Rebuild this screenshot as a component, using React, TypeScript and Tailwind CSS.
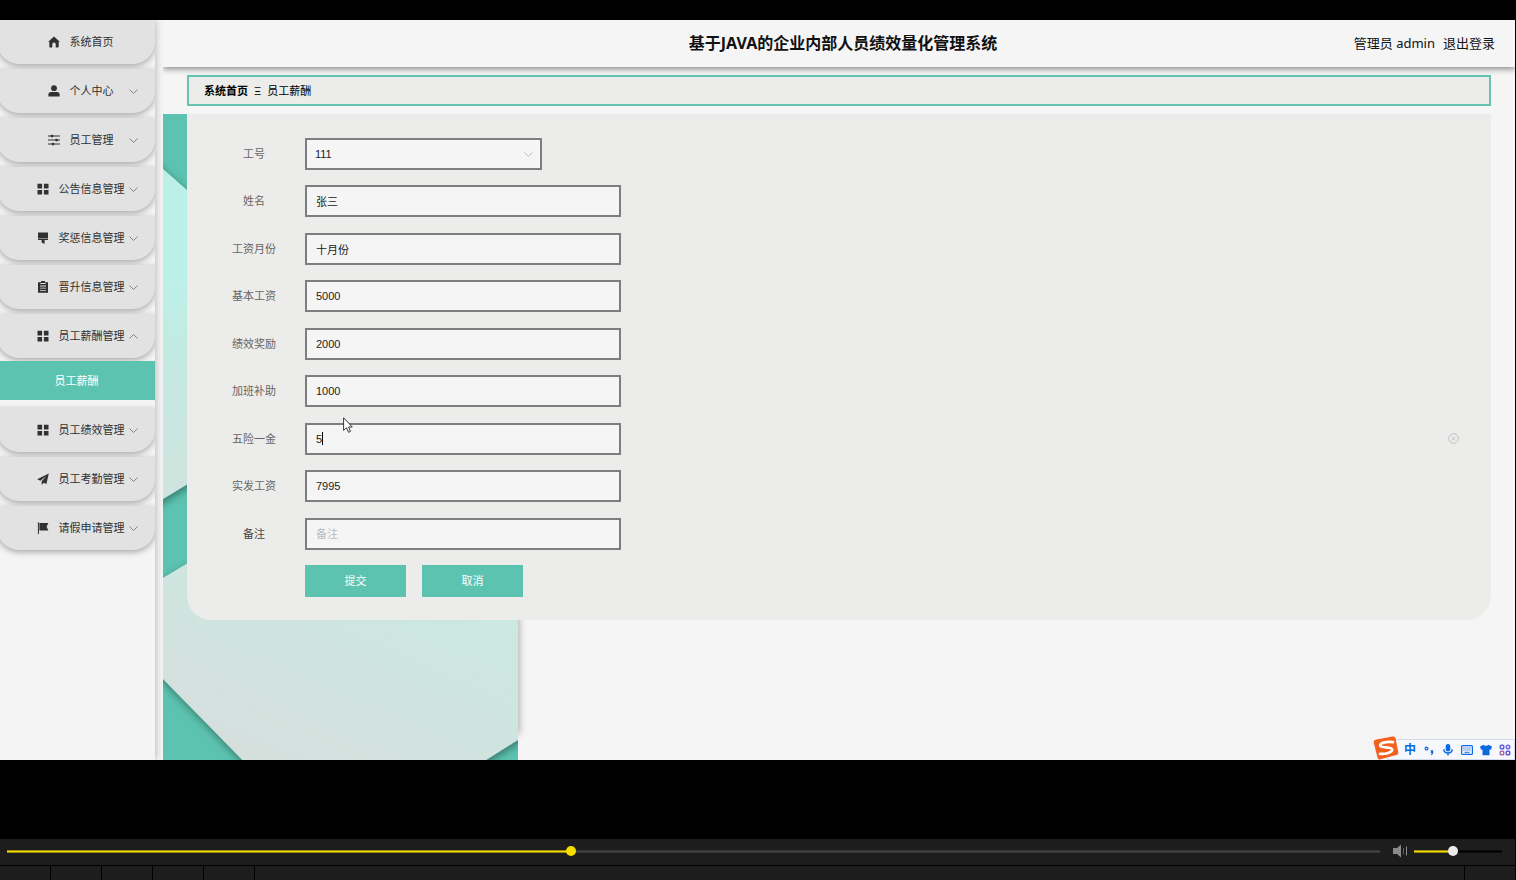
import type { ReactNode } from 'react'

const icons: Record<string, ReactNode> = {
  home: <path d="M6 .4.2 5.7h1.1v5.1c0 .4.3.7.7.7h2.3V8.2a1.7 1.7 0 0 1 3.4 0v3.3H10c.4 0 .7-.3.7-.7V5.7h1.1z" />,
  user: (
    <>
      <circle cx="6" cy="3.2" r="2.9" />
      <path d="M.4 11.6V9.4C.4 7.8 1.6 7 3 7h6c1.4 0 2.6.8 2.6 2.4v2.2z" />
    </>
  ),
  operation: (
    <>
      <path d="M0 1.6h12v1H0zM0 5.6h12v1H0zM0 9.6h12v1H0z" />
      <circle cx="4" cy="2.1" r="1.4" />
      <circle cx="8.5" cy="6.1" r="1.4" />
      <circle cx="5" cy="10.1" r="1.4" />
    </>
  ),
  grid: <path d="M.5.8h4.6v4.6H.5zM6.9.8h4.6v4.6H6.9zM.5 7h4.6v4.6H.5zM6.9 7h4.6v4.6H6.9z" />,
  brush: <path d="M1 .5h10v5.6H1zM1 6.6h10V8H7.6v4L4.6 10.4V8H1z" />,
  clipboard: (
    <path
      fillRule="evenodd"
      d="M4 0h4v1.3h3v10.4H1V1.3h3zM3.4 2v1h5.2V2zM3 4.6v.8h6v-.8zM3 6.8v.8h6v-.8zM3 9v.8h6V9z"
    />
  ),
  plane: <path d="M11.8.4.2 6.2l3.2 1.5L9.5 3 4.7 8.3V12l2.1-2.3 2.6 1.2z" />,
  flag: <path d="M.9.3h1v11.6h-1zM2.4.9h9L9.6 4.7l1.8 3.8h-9z" />,
}

const menu = [
  { label: '系统首页', icon: 'home' },
  { label: '个人中心', icon: 'user', arrow: true },
  { label: '员工管理', icon: 'operation', arrow: true },
  { label: '公告信息管理', icon: 'grid', arrow: true },
  { label: '奖惩信息管理', icon: 'brush', arrow: true },
  { label: '晋升信息管理', icon: 'clipboard', arrow: true },
  { label: '员工薪酬管理', icon: 'grid', arrow: true, children: ['员工薪酬'] },
  { label: '员工绩效管理', icon: 'grid', arrow: true },
  { label: '员工考勤管理', icon: 'plane', arrow: true },
  { label: '请假申请管理', icon: 'flag', arrow: true },
]

const fields = [
  { id: 'name', label: '姓名', value: '张三' },
  { id: 'month', label: '工资月份', value: '十月份' },
  { id: 'base', label: '基本工资', value: '5000' },
  { id: 'bonus', label: '绩效奖励', value: '2000' },
  { id: 'overtime', label: '加班补助', value: '1000' },
  { id: 'insurance', label: '五险一金', value: '5', editing: true },
  { id: 'actual', label: '实发工资', value: '7995' },
  { id: 'remark', label: '备注', value: '', dark: true },
]

function Chevron({ up, className }: { up?: boolean; className: string }) {
  return (
    <svg viewBox="0 0 9 9" className={className} fill="none" stroke="currentColor" strokeWidth="0.9">
      <path d={up ? 'M.5 6.5 4.5 2.5l4 4' : 'M.5 2.5l4 4 4-4'} />
    </svg>
  )
}

function Sidebar() {
  return (
    <nav className="w-[155px] shrink-0 overflow-hidden bg-[#f4f4f4] shadow-[0_0_8px_rgba(0,0,0,0.3)]">
      <ul className="flex flex-col gap-[5px]">
        {menu.map(item => (
          <li key={item.label}>
            <button className="-ml-[3px] flex h-11 w-[158px] items-center rounded-b-[22px] bg-[#e2e2e2] pl-[35px] pr-[17px] text-[#303133] shadow-[0_2px_6px_rgba(0,0,0,0.32)]">
              <span className="flex flex-1 items-center justify-center gap-2.5 whitespace-nowrap">
                <svg viewBox="0 0 12 12" className="h-3 w-3 shrink-0" fill="currentColor">{icons[item.icon]}</svg>
                {item.label}
              </span>
              {item.arrow ? <Chevron up={!!item.children} className="h-[9px] w-[9px] text-[#77797c]" /> : <span className="w-[9px]" />}
            </button>
            {item.children?.map(c => (
              <a key={c} href="#" className="relative mb-[3px] mt-[3px] flex h-[39px] items-center justify-center bg-[#5cc3b0] pr-0.5 text-white">
                {c}
              </a>
            ))}
          </li>
        ))}
      </ul>
    </nav>
  )
}

function Backdrop() {
  return (
    <svg viewBox="0 0 375 646" className="absolute left-0 top-0 h-[646px] w-[375px]">
      <defs>
        <linearGradient id="upper" x1="0" y1="0" x2="0" y2="1">
          <stop offset="0.35" stopColor="#bcf0e7" />
          <stop offset="0.6" stopColor="#c4e9e1" />
          <stop offset="1" stopColor="#d2e2de" />
        </linearGradient>
        <linearGradient id="lower" gradientUnits="userSpaceOnUse" x1="90" y1="660" x2="190" y2="440">
          <stop offset="0" stopColor="#d6dfdd" />
          <stop offset="1" stopColor="#cbe8e1" />
        </linearGradient>
        <filter id="soft" x="-20%" y="-20%" width="140%" height="140%">
          <feDropShadow dx="1" dy="3" stdDeviation="4" floodColor="#000" floodOpacity="0.4" />
        </filter>
        <filter id="edge" x="-10%" y="-10%" width="120%" height="120%">
          <feDropShadow dx="2" dy="0" stdDeviation="3" floodColor="#000" floodOpacity="0.25" />
        </filter>
        <clipPath id="sheet">
          <path d="M0 0h355v646H0z" />
        </clipPath>
      </defs>
      <path d="M0 0h355v620H0z" fill="#f5f5f5" filter="url(#edge)" />
      <g clipPath="url(#sheet)">
        <path d="M0 0h355v646H0z" fill="#5cc3b0" />
        <path d="M-20 36 0 55l200 176v32L0 385l-20 12z" fill="url(#upper)" filter="url(#soft)" />
        <path d="M-20 476 0 464 380 235v375L323 646l-40 26H105L0 565l-20-20z" fill="url(#lower)" filter="url(#soft)" />
      </g>
    </svg>
  )
}

function PayForm() {
  const box = 'h-8 border-2 border-[#7c7e80] bg-[#f5f5f5] text-[#222] outline-none rounded-none'
  return (
    <form className="relative mx-6 rounded-b-3xl bg-[#ececea] pb-[23px] pl-4 pr-8 pt-6">
      <div className="flex min-h-[459px] flex-col justify-between">
        <div className="flex items-center">
          <label htmlFor="no" className="w-[102px] text-center text-[#666]">工号</label>
          <div className="relative">
            <select id="no" className={`${box} w-[237px] appearance-none pl-2`}>
              <option>111</option>
            </select>
            <Chevron className="pointer-events-none absolute right-[9px] top-3 h-[9px] w-[9px] text-[#b4b6ba]" />
          </div>
        </div>
        {fields.map(f => (
          <div key={f.id} className="flex items-center">
            <label htmlFor={f.id} className={`w-[102px] text-center ${f.dark ? 'text-[#444]' : 'text-[#666]'}`}>{f.label}</label>
            <div className="relative">
              <input
                id={f.id}
                defaultValue={f.value}
                placeholder={f.label}
                className={`${box} block w-[316px] px-[9px] placeholder:text-[#b9bbc0]`}
              />
              {f.editing && (
                <>
                  <span className="absolute left-[17px] top-[9px] h-[13px] w-px bg-black" />
                  <svg viewBox="0 0 11 17" className="absolute -top-1.5 left-[38px] h-[17px] w-[11px]" fill="#fff" stroke="#222" strokeWidth="0.9">
                    <path d="M.6.8v12.6l2.9-2.7 2 4.6 2-.9-2-4.4h3.8z" />
                  </svg>
                </>
              )}
            </div>
            {f.editing && (
              <button type="button" aria-label="清空" className="ml-auto">
                <svg viewBox="0 0 11 11" className="h-[11px] w-[11px]" fill="none" stroke="#b9bbbf" strokeWidth="0.9">
                  <circle cx="5.5" cy="5.5" r="4.8" />
                  <path d="m3.7 3.7 3.6 3.6M7.3 3.7 3.7 7.3" />
                </svg>
              </button>
            )}
          </div>
        ))}
        <div className="flex gap-4 pl-[102px] text-white">
          <button type="button" className="h-8 w-[101px] bg-[#5cc3b0]">提交</button>
          <button type="button" className="h-8 w-[101px] bg-[#5cc3b0]">取消</button>
        </div>
      </div>
    </form>
  )
}

// input method status bar pinned to the desktop corner
function ImeBar() {
  return (
    <div className="absolute bottom-0 right-0 flex items-end">
      <svg viewBox="0 0 26 24" className="z-10 -mr-3 h-6 w-[26px]">
        <path d="M3.2 3.6 19.6.5c1.5-.3 2.6.4 2.9 1.8l2.8 13.6c.3 1.6-.5 2.7-2 3L7.6 23.3c-1.6.4-2.7-.3-3.1-1.9L.8 6.9C.4 5.2 1.3 4 3.2 3.6z" fill="#f4611c" />
        <path d="M20 6.2C14.5 5.2 7.2 6.4 7.2 9.5c0 3 12 .8 12 4 0 3-6.5 4.8-12.2 4.3" fill="none" stroke="#fff" strokeWidth="2.7" strokeLinecap="round" />
      </svg>
      <div className="flex h-[21px] items-center gap-[7px] border border-[#d5d9ee] bg-[#f7f8fc] pl-4 pr-[3px] text-[#0a6be0]">
        <span className="w-3 text-xs font-bold leading-3">中</span>
        <svg viewBox="0 0 12 12" className="h-3 w-3" fill="currentColor">
          <circle cx="3.5" cy="4.5" r="1.4" fill="none" stroke="currentColor" strokeWidth="1.2" />
          <path d="M7.8 6.2h2.4v2.4c0 1.3-.7 2.2-1.9 2.6l-.4-.9c.6-.3.9-.7.9-1.3h-1z" />
        </svg>
        <svg viewBox="0 0 12 12" className="h-3 w-3" fill="currentColor">
          <rect x="3.7" y="0" width="4.6" height="7.5" rx="2.3" />
          <path d="M1.8 5.3c0 5 8.4 5 8.4 0M6 9v2.5" fill="none" stroke="currentColor" strokeWidth="1.4" />
        </svg>
        <svg viewBox="0 0 12 12" className="h-3 w-3" fill="none" stroke="currentColor">
          <rect x=".6" y="1.6" width="10.8" height="8.8" rx="1" strokeWidth="1.2" />
          <path d="M2.3 4h7.4M2.3 6h7.4" strokeWidth="1.1" strokeDasharray="1.2 .8" />
          <path d="M3.5 8.3h5" />
        </svg>
        <svg viewBox="0 0 12 12" className="h-3 w-3" fill="currentColor">
          <path d="M3.7.8C4.6 2.2 7.4 2.2 8.3.8L12 2.5l-1 3.3-1.5-.4v5.8h-7V5.4L1 5.8 0 2.5z" />
        </svg>
        <svg viewBox="0 0 12 12" className="h-3 w-3" fill="none" strokeWidth="1.5">
          <rect x="1.3" y="1.3" width="3.4" height="3.4" rx=".8" stroke="#5a5fe0" />
          <circle cx="9" cy="3" r="1.8" stroke="#6a6ff0" />
          <rect x="1.3" y="7.3" width="3.4" height="3.4" rx=".8" stroke="#b06a9c" />
          <rect x="7.3" y="7.3" width="3.4" height="3.4" rx=".8" stroke="#5a5fe0" />
        </svg>
      </div>
    </div>
  )
}

function Player() {
  return (
    <footer className="mr-px mt-[79px] text-[#8a8a8a]">
      <div className="flex h-[26px] items-center bg-[#1d1d1d] pb-0.5 pl-[7px] pr-[13px]">
        <input
          type="range"
          aria-label="进度"
          defaultValue="41"
          className="h-[3px] min-w-0 flex-1 appearance-none bg-[linear-gradient(rgba(29,29,29,0.4)_1px,transparent_1px_2px,rgba(29,29,29,0.4)_2px),linear-gradient(to_right,#f5d800_41%,#444_41%)] [&::-webkit-slider-thumb]:h-2.5 [&::-webkit-slider-thumb]:w-2.5 [&::-webkit-slider-thumb]:appearance-none [&::-webkit-slider-thumb]:rounded-full [&::-webkit-slider-thumb]:bg-[#f7dc00]"
        />
        <svg viewBox="0 0 14 14" className="ml-[13px] mr-[7px] h-3.5 w-3.5" fill="currentColor">
          <path d="M0 4h4l4-3.5v13L4 10H0z" />
          <path d="M10 4h1v6h-1z" fill="#5f5f5f" />
          <path d="M13 2.5h1v9h-1z" />
        </svg>
        <input
          type="range"
          aria-label="音量"
          defaultValue="44"
          className="h-[3px] w-[88px] appearance-none bg-[linear-gradient(rgba(29,29,29,0.4)_1px,transparent_1px_2px,rgba(29,29,29,0.4)_2px),linear-gradient(to_right,#f5d800_44%,#000_44%)] [&::-webkit-slider-thumb]:h-2.5 [&::-webkit-slider-thumb]:w-2.5 [&::-webkit-slider-thumb]:appearance-none [&::-webkit-slider-thumb]:rounded-full [&::-webkit-slider-thumb]:bg-[#ececec]"
        />
      </div>
      <div className="mt-px flex h-3.5 bg-[#1d1d1d]">
        {[0, 1, 2, 3, 4].map(i => (
          <div key={i} className="w-[51px] border-r border-black" />
        ))}
        <div className="ml-auto w-[51px] border-l border-black" />
      </div>
    </footer>
  )
}

export default function App() {
  return (
    <div className="flex min-h-screen flex-col bg-black pt-5 font-['Liberation_Sans','Noto_Sans_CJK_SC',sans-serif] text-[11px] leading-4">
      <div className="relative mr-px flex flex-1 gap-2 overflow-hidden bg-[#f5f5f5]">
        <Sidebar />
        <main className="flex min-w-0 flex-1 flex-col overflow-hidden">
          <header className="grid h-[47px] grid-cols-[1fr_auto_1fr] items-center bg-[#f5f5f5] pb-0.5 pl-7 pr-5 font-['Noto_Sans','Noto_Sans_CJK_SC',sans-serif] text-[#111] shadow-[0_2px_6px_rgba(0,0,0,0.45)]">
            <h1 className="col-start-2 text-base font-bold">基于JAVA的企业内部人员绩效量化管理系统</h1>
            <div className="flex justify-end gap-2 text-[13px]">
              <span>管理员 admin</span>
              <a href="#">退出登录</a>
            </div>
          </header>
          <div className="mx-6 my-2 flex h-[31px] items-center gap-1.5 border-2 border-[#66c2b1] bg-[#ececea] px-[15px] text-black">
            <a href="#" className="font-bold">系统首页</a>
            <span>Ξ</span>
            <span>员工薪酬</span>
          </div>
          <div className="relative flex-1 overflow-hidden">
            <Backdrop />
            <PayForm />
          </div>
        </main>
        <ImeBar />
      </div>
      <Player />
    </div>
  )
}
